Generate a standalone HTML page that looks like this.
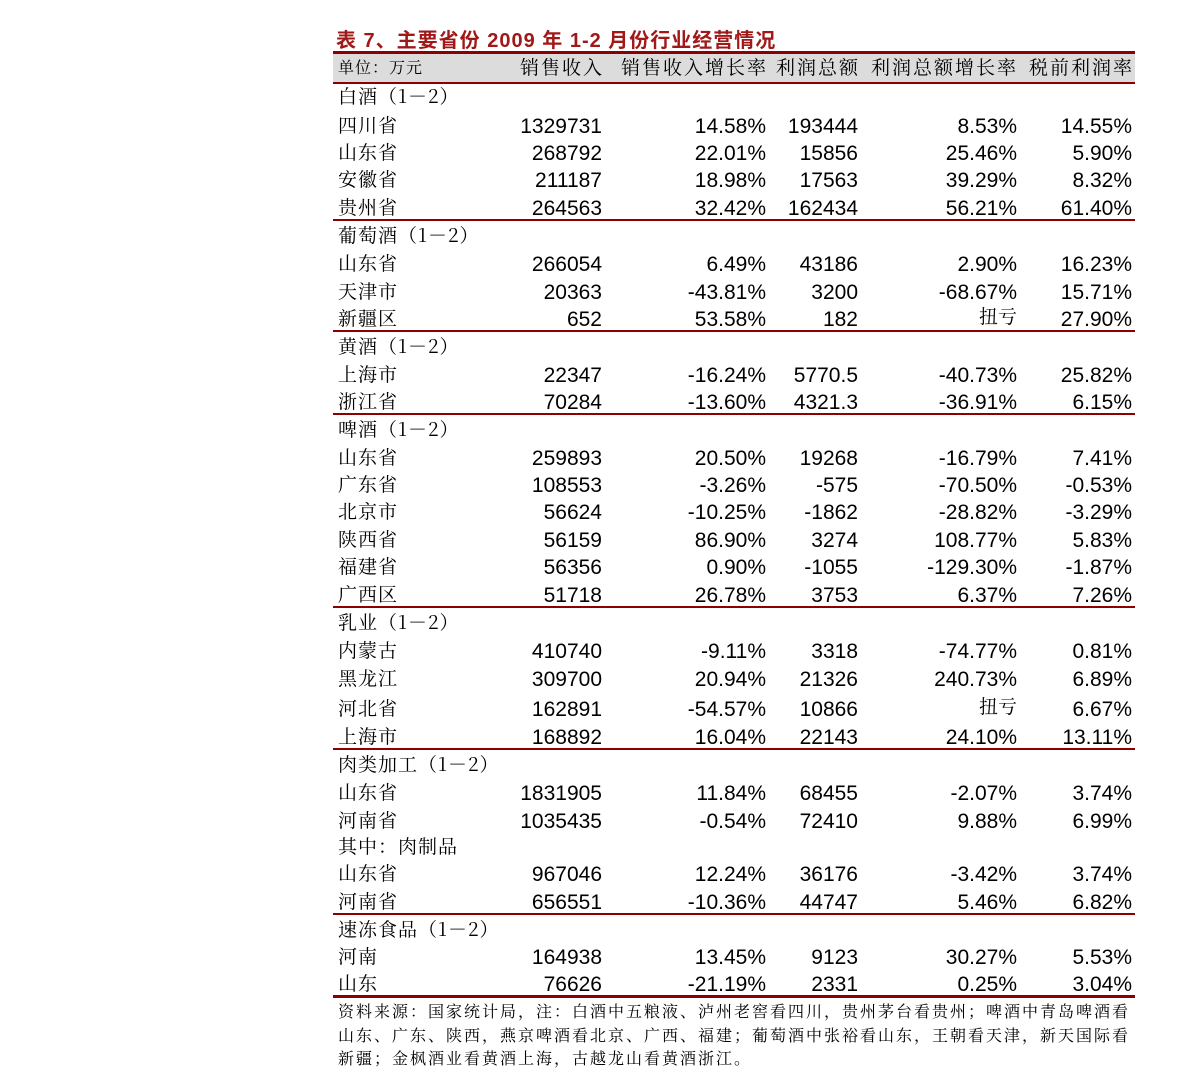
<!DOCTYPE html><html><head><meta charset="utf-8"><style>
body{margin:0;width:1191px;height:1088px;background:#fff;position:relative;font-family:"Liberation Sans",sans-serif;color:#000;overflow:hidden}
.t{position:absolute;left:336px;top:24px;font-size:20px;font-weight:bold;color:#a01818;font-family:"Liberation Sans","Noto Sans CJK SC",sans-serif;white-space:nowrap;letter-spacing:1px}
.hl{position:absolute;left:333px;width:802px;background:#8b0000}
.hb{position:absolute;left:333px;top:54px;width:802px;height:28px;background:#dcdcdc}
.r{position:absolute;left:0;width:1191px;height:26px;line-height:26px;font-size:21px;white-space:nowrap}
.r span{position:absolute;top:2px}
.r span.l{top:0}
.l{left:338px;font-family:"Noto Serif CJK SC","Liberation Serif",serif;font-size:19px;letter-spacing:1px}
.a{right:589px}.b{right:425px}.c{right:333px}.d{right:174px}.e{right:59px}
.cj{font-family:"Noto Serif CJK SC",serif;font-size:19px}
.h span{font-family:"Noto Serif CJK SC",serif;font-size:19px;letter-spacing:2px;top:0}
.n{position:absolute;left:338px;font-family:"Noto Serif CJK SC",serif;font-size:16px;letter-spacing:2px;white-space:nowrap;line-height:24px}
</style></head><body>
<div class="t">表 7、主要省份 2009 年 1-2 月份行业经营情况</div>
<div class="hl" style="top:51px;height:3px"></div>
<div class="hb"></div>
<div class="hl" style="top:82px;height:2px"></div>
<div class="r h" style="top:54px"><span style="left:338px;font-size:16px;letter-spacing:1px">单位：万元</span><span class="a" style="right:587px">销售收入</span><span class="b" style="right:423px">销售收入增长率</span><span class="c" style="right:331px">利润总额</span><span class="d" style="right:173px">利润总额增长率</span><span class="e" style="right:57px">税前利润率</span></div>

<div class="r" style="top:83px"><span class="l">白酒（1－2）</span></div>
<div class="r" style="top:112px"><span class="l">四川省</span><span class="a">1329731</span><span class="b">14.58%</span><span class="c">193444</span><span class="d">8.53%</span><span class="e">14.55%</span></div>
<div class="r" style="top:139px"><span class="l">山东省</span><span class="a">268792</span><span class="b">22.01%</span><span class="c">15856</span><span class="d">25.46%</span><span class="e">5.90%</span></div>
<div class="r" style="top:166px"><span class="l">安徽省</span><span class="a">211187</span><span class="b">18.98%</span><span class="c">17563</span><span class="d">39.29%</span><span class="e">8.32%</span></div>
<div class="r" style="top:194px"><span class="l">贵州省</span><span class="a">264563</span><span class="b">32.42%</span><span class="c">162434</span><span class="d">56.21%</span><span class="e">61.40%</span></div>
<div class="hl" style="top:219px;height:2px"></div>
<div class="r" style="top:222px"><span class="l">葡萄酒（1－2）</span></div>
<div class="r" style="top:250px"><span class="l">山东省</span><span class="a">266054</span><span class="b">6.49%</span><span class="c">43186</span><span class="d">2.90%</span><span class="e">16.23%</span></div>
<div class="r" style="top:278px"><span class="l">天津市</span><span class="a">20363</span><span class="b">-43.81%</span><span class="c">3200</span><span class="d">-68.67%</span><span class="e">15.71%</span></div>
<div class="r" style="top:305px"><span class="l">新疆区</span><span class="a">652</span><span class="b">53.58%</span><span class="c">182</span><span class="d cj" style="top:-2px">扭亏</span><span class="e">27.90%</span></div>
<div class="hl" style="top:330px;height:2px"></div>
<div class="r" style="top:333px"><span class="l">黄酒（1－2）</span></div>
<div class="r" style="top:361px"><span class="l">上海市</span><span class="a">22347</span><span class="b">-16.24%</span><span class="c">5770.5</span><span class="d">-40.73%</span><span class="e">25.82%</span></div>
<div class="r" style="top:388px"><span class="l">浙江省</span><span class="a">70284</span><span class="b">-13.60%</span><span class="c">4321.3</span><span class="d">-36.91%</span><span class="e">6.15%</span></div>
<div class="hl" style="top:413px;height:2px"></div>
<div class="r" style="top:416px"><span class="l">啤酒（1－2）</span></div>
<div class="r" style="top:444px"><span class="l">山东省</span><span class="a">259893</span><span class="b">20.50%</span><span class="c">19268</span><span class="d">-16.79%</span><span class="e">7.41%</span></div>
<div class="r" style="top:471px"><span class="l">广东省</span><span class="a">108553</span><span class="b">-3.26%</span><span class="c">-575</span><span class="d">-70.50%</span><span class="e">-0.53%</span></div>
<div class="r" style="top:498px"><span class="l">北京市</span><span class="a">56624</span><span class="b">-10.25%</span><span class="c">-1862</span><span class="d">-28.82%</span><span class="e">-3.29%</span></div>
<div class="r" style="top:526px"><span class="l">陕西省</span><span class="a">56159</span><span class="b">86.90%</span><span class="c">3274</span><span class="d">108.77%</span><span class="e">5.83%</span></div>
<div class="r" style="top:553px"><span class="l">福建省</span><span class="a">56356</span><span class="b">0.90%</span><span class="c">-1055</span><span class="d">-129.30%</span><span class="e">-1.87%</span></div>
<div class="r" style="top:581px"><span class="l">广西区</span><span class="a">51718</span><span class="b">26.78%</span><span class="c">3753</span><span class="d">6.37%</span><span class="e">7.26%</span></div>
<div class="hl" style="top:606px;height:2px"></div>
<div class="r" style="top:609px"><span class="l">乳业（1－2）</span></div>
<div class="r" style="top:637px"><span class="l">内蒙古</span><span class="a">410740</span><span class="b">-9.11%</span><span class="c">3318</span><span class="d">-74.77%</span><span class="e">0.81%</span></div>
<div class="r" style="top:665px"><span class="l">黑龙江</span><span class="a">309700</span><span class="b">20.94%</span><span class="c">21326</span><span class="d">240.73%</span><span class="e">6.89%</span></div>
<div class="r" style="top:695px"><span class="l">河北省</span><span class="a">162891</span><span class="b">-54.57%</span><span class="c">10866</span><span class="d cj" style="top:-2px">扭亏</span><span class="e">6.67%</span></div>
<div class="r" style="top:723px"><span class="l">上海市</span><span class="a">168892</span><span class="b">16.04%</span><span class="c">22143</span><span class="d">24.10%</span><span class="e">13.11%</span></div>
<div class="hl" style="top:748px;height:2px"></div>
<div class="r" style="top:751px"><span class="l">肉类加工（1－2）</span></div>
<div class="r" style="top:779px"><span class="l">山东省</span><span class="a">1831905</span><span class="b">11.84%</span><span class="c">68455</span><span class="d">-2.07%</span><span class="e">3.74%</span></div>
<div class="r" style="top:807px"><span class="l">河南省</span><span class="a">1035435</span><span class="b">-0.54%</span><span class="c">72410</span><span class="d">9.88%</span><span class="e">6.99%</span></div>
<div class="r" style="top:833px"><span class="l">其中：肉制品</span></div>
<div class="r" style="top:860px"><span class="l">山东省</span><span class="a">967046</span><span class="b">12.24%</span><span class="c">36176</span><span class="d">-3.42%</span><span class="e">3.74%</span></div>
<div class="r" style="top:888px"><span class="l">河南省</span><span class="a">656551</span><span class="b">-10.36%</span><span class="c">44747</span><span class="d">5.46%</span><span class="e">6.82%</span></div>
<div class="hl" style="top:913px;height:2px"></div>
<div class="r" style="top:916px"><span class="l">速冻食品（1－2）</span></div>
<div class="r" style="top:943px"><span class="l">河南</span><span class="a">164938</span><span class="b">13.45%</span><span class="c">9123</span><span class="d">30.27%</span><span class="e">5.53%</span></div>
<div class="r" style="top:970px"><span class="l">山东</span><span class="a">76626</span><span class="b">-21.19%</span><span class="c">2331</span><span class="d">0.25%</span><span class="e">3.04%</span></div>
<div class="hl" style="top:995px;height:3px"></div>
<div class="n" style="top:999px">资料来源：国家统计局，注：白酒中五粮液、泸州老窖看四川，贵州茅台看贵州；啤酒中青岛啤酒看</div>
<div class="n" style="top:1023px">山东、广东、陕西，燕京啤酒看北京、广西、福建；葡萄酒中张裕看山东，王朝看天津，新天国际看</div>
<div class="n" style="top:1046px">新疆；金枫酒业看黄酒上海，古越龙山看黄酒浙江。</div>
</body></html>
